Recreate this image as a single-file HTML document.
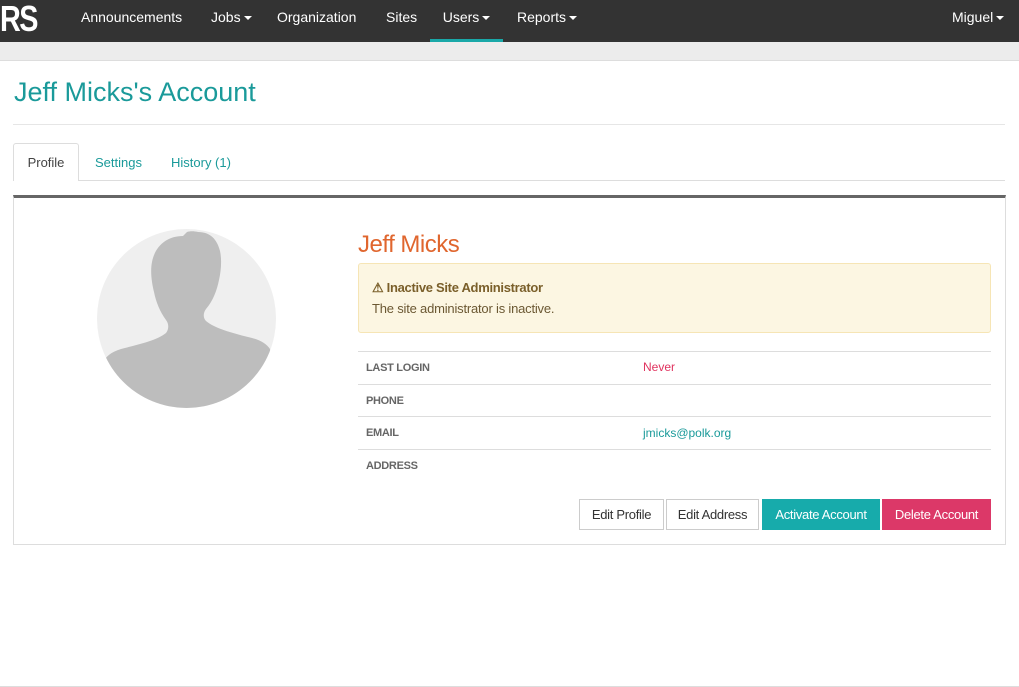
<!DOCTYPE html>
<html><head><style>
*{box-sizing:border-box;margin:0;padding:0}
body{width:1019px;height:687px;overflow:hidden;background:#fff;font-family:"Liberation Sans",sans-serif;position:relative}
.nav{position:absolute;left:0;top:0;width:1019px;height:42px;background:#333}
.logo{position:absolute;left:0;top:0;color:#fff;font:bold 36px/38px "Liberation Sans",sans-serif;letter-spacing:-2px;transform:scaleX(.8);transform-origin:left}
.ni{position:absolute;top:0;height:42px;line-height:35px;color:#fff;font-size:14px}
.car{display:inline-block;border-top:4px solid #fff;border-left:4px solid transparent;border-right:4px solid transparent;vertical-align:middle;margin-left:3px}
.gray{position:absolute;top:42px;left:0;width:1019px;height:19px;background:#ececec;border-bottom:1px solid #ddd}
.abs{position:absolute}
.t{color:#1a9a9a}
.lbl{position:absolute;left:366px;font-size:11px;font-weight:bold;color:#666;letter-spacing:-.3px}
.line{position:absolute;left:358px;width:633px;height:1px;background:#ddd}
.btn{position:absolute;top:499px;height:31px;font-size:13px;line-height:29px;text-align:center;border:1px solid #ccc;color:#333;background:#fff;letter-spacing:-.3px}
</style></head><body>
<div class="nav">
<div class="logo">RS</div>
<div class="ni" style="left:81px">Announcements</div>
<div class="ni" style="left:211px">Jobs<span class="car"></span></div>
<div class="ni" style="left:277px">Organization</div>
<div class="ni" style="left:386px">Sites</div>
<div class="ni" style="left:430px;width:73px;text-align:center;border-bottom:3px solid #1aa8a8;height:42px">Users<span class="car"></span></div>
<div class="ni" style="left:517px">Reports<span class="car"></span></div>
<div class="ni" style="left:952px">Miguel<span class="car"></span></div>
</div>
<div class="gray"></div>
<div class="abs t" style="left:14px;top:77px;font-size:27px">Jeff Micks's Account</div>
<div class="abs" style="left:13px;top:124px;width:992px;height:1px;background:#e6e6e6"></div>
<div class="abs" style="left:13px;top:180px;width:992px;height:1px;background:#ddd"></div>
<div class="abs" style="left:13px;top:143px;width:66px;height:38px;border:1px solid #ddd;border-bottom:none;background:#fff;border-radius:3px 3px 0 0;font-size:13px;color:#444;line-height:37px;text-align:center">Profile</div>
<div class="abs t" style="left:95px;top:155px;font-size:13px">Settings</div>
<div class="abs t" style="left:171px;top:155px;font-size:13px">History (1)</div>
<div class="abs" style="left:13px;top:195px;width:993px;height:350px;border:1px solid #ddd;border-top:3px solid #666"></div>
<svg class="abs" style="left:97px;top:229px" width="179" height="179" viewBox="0 0 179 179">
<defs><clipPath id="c"><circle cx="89.5" cy="89.5" r="89.5"/></clipPath></defs>
<circle cx="89.5" cy="89.5" r="89.5" fill="#efefef"/>
<g clip-path="url(#c)" fill="#bdbdbd">
<path d="M86 7C70 7 58 17 55 33c-2 10 0 22 2 30 2 10 6 20 12 28 3 4 3 9 0 13-10 8-30 12-45 16-10 3-16 8-18 14L0 179h179l-6-59c-4-6-12-10-22-12-16-4-34-9-42-16-3-3-3-8 0-12 7-8 11-19 13-29 2-9 3-20 1-29-3-12-10-19-22-19-4-1-8-1-11 0z"/>
</g></svg>
<div class="abs" style="left:358px;top:231px;font-size:24px;color:#e0662e;letter-spacing:-.5px">Jeff Micks</div>
<div class="abs" style="left:358px;top:263px;width:633px;height:70px;background:#fcf6e2;border:1px solid #f6e5b5;border-radius:3px"></div>
<div class="abs" style="left:372px;top:280px;font-size:13px;font-weight:bold;color:#7a5f2a;letter-spacing:-.3px">⚠ Inactive Site Administrator</div>
<div class="abs" style="left:372px;top:301px;font-size:13px;color:#6b5833;letter-spacing:-.2px">The site administrator is inactive.</div>
<div class="line" style="top:351px"></div>
<div class="line" style="top:384px"></div>
<div class="line" style="top:416px"></div>
<div class="line" style="top:449px"></div>
<div class="lbl" style="top:362px">LAST LOGIN</div>
<div class="lbl" style="top:395px">PHONE</div>
<div class="lbl" style="top:427px">EMAIL</div>
<div class="lbl" style="top:460px">ADDRESS</div>
<div class="abs" style="left:643px;top:360px;font-size:12px;color:#e0335f">Never</div>
<div class="abs t" style="left:643px;top:426px;font-size:12px">jmicks@polk.org</div>
<div class="btn" style="left:579px;width:85px">Edit Profile</div>
<div class="btn" style="left:666px;width:93px">Edit Address</div>
<div class="btn" style="left:762px;width:118px;background:#17abab;border-color:#17abab;color:#fff">Activate Account</div>
<div class="btn" style="left:882px;width:109px;background:#dc3868;border-color:#dc3868;color:#fff">Delete Account</div>
<div class="abs" style="left:0;top:686px;width:1019px;height:1px;background:#ddd"></div>
</body></html>
